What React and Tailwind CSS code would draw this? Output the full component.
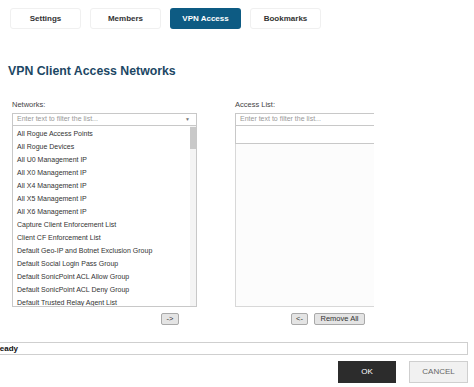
import { useState } from 'react';

const tabs = ['Settings', 'Members', 'VPN Access', 'Bookmarks'];

const networks = [
  'All Rogue Access Points',
  'All Rogue Devices',
  'All U0 Management IP',
  'All X0 Management IP',
  'All X4 Management IP',
  'All X5 Management IP',
  'All X6 Management IP',
  'Capture Client Enforcement List',
  'Client CF Enforcement List',
  'Default Geo-IP and Botnet Exclusion Group',
  'Default Social Login Pass Group',
  'Default SonicPoint ACL Allow Group',
  'Default SonicPoint ACL Deny Group',
  'Default Trusted Relay Agent List',
];

function SmallButton({ children, className = '' }) {
  return (
    <button className={`h-[12px] rounded-[2px] border border-[#a9a9a9] bg-[#e4e4e4] text-[7.5px] leading-[10px] text-[#333] ${className}`}>
      {children}
    </button>
  );
}

export default function App() {
  const [active, setActive] = useState('VPN Access');

  return (
    <div className="relative h-[387px] w-[474px] overflow-hidden bg-white font-['Liberation_Sans',sans-serif] text-[#333]">
      <div className="flex gap-[9px] pl-[10px] pt-[8px]">
        {tabs.map((t) => (
          <button
            key={t}
            onClick={() => setActive(t)}
            className={
              active === t
                ? 'h-[21px] w-[71px] rounded-[3px] bg-[#0d5b83] text-[8px] font-bold text-white'
                : 'h-[21px] w-[71px] rounded-[3px] border border-[#f0f0f0] bg-white text-[8px] font-bold text-[#333]'
            }
          >
            {t}
          </button>
        ))}
      </div>

      <h1 className="ml-[8px] mt-[34px] text-[12.3px] font-bold leading-[16px] text-[#1c4764]">
        VPN Client Access Networks
      </h1>

      <div className="mt-[21px] flex">
        <div className="ml-[12px] w-[185px]">
          <div className="h-[10px] text-[7.5px] leading-[10px] text-[#444]">Networks:</div>
          <div className="mt-[3px] flex h-[13px] items-center justify-between border border-[#c8c8c8] pl-[4px] pr-[6px] text-[7px] text-[#999]">
            <span>Enter text to filter the list...</span>
            <span className="text-[5px] text-[#777]">▼</span>
          </div>
          <div className="flex h-[181px] border border-t-0 border-[#c8c8c8]">
            <div className="flex-1 overflow-hidden pl-[4px] pt-[1px]">
              {networks.map((n) => (
                <div key={n} className="h-[13px] text-[7px] leading-[13px] text-[#333]">
                  {n}
                </div>
              ))}
            </div>
            <div className="w-[6px] bg-[#f4f4f4]">
              <div className="mt-[1px] h-[22px] w-[6px] bg-[#c9c9c9]" />
            </div>
          </div>
          <div className="mt-[6px] flex pl-[149px]">
            <SmallButton className="w-[18px]">-&gt;</SmallButton>
          </div>
        </div>

        <div className="ml-[38px] w-[139px]">
          <div className="h-[10px] text-[7.5px] leading-[10px] text-[#444]">Access List:</div>
          <div className="mt-[3px] flex h-[13px] items-center border border-r-0 border-[#c8c8c8] pl-[4px] text-[7px] text-[#999]">
            <span>Enter text to filter the list...</span>
          </div>
          <div className="h-[18px] border-b border-l border-[#c8c8c8]" />
          <div className="h-[163px] border-b border-l border-[#d8d8d8] bg-[#fcfcfc]" />
          <div className="mt-[6px] flex justify-end gap-[6px] pr-[9px]">
            <SmallButton className="w-[17px]">&lt;-</SmallButton>
            <SmallButton className="w-[51px]">Remove All</SmallButton>
          </div>
        </div>
      </div>

      <div className="mt-[17px] h-[13px] w-[468px] overflow-hidden border-y border-r border-[#cfcfcf] text-[8px] font-bold leading-[11px] text-[#111]">
        <span className="-ml-[6px]">Ready</span>
      </div>

      <div className="mt-[6px] flex justify-end gap-[13px] pr-[6px]">
        <button className="h-[22px] w-[58px] bg-[#2c2c2c] text-[8px] text-white">OK</button>
        <button className="h-[22px] w-[59px] border border-[#cfcfcf] bg-[#f1f1f1] text-[8px] text-[#666]">CANCEL</button>
      </div>
    </div>
  );
}
